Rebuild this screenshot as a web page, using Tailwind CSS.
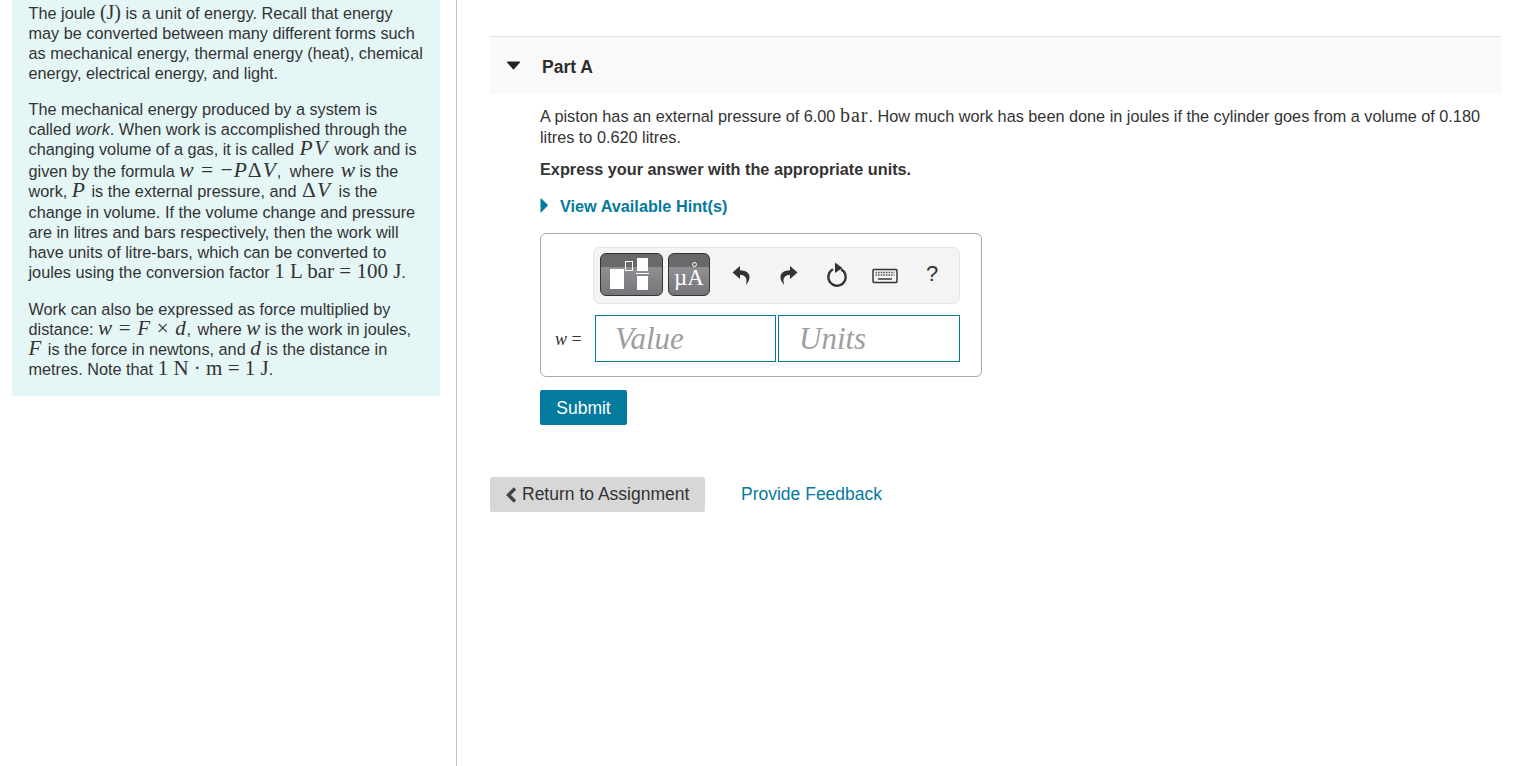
<!DOCTYPE html>
<html lang="en">
  <head>
    <meta charset="UTF-8" />
    <title>Part A</title>
    <script src="https://cdn.jsdelivr.net/npm/@tailwindcss/browser@4"></script>
  </head>
  <body class="bg-white h-[766px] overflow-hidden font-['Liberation_Sans',sans-serif] text-[#333] text-[16.25px] leading-[20px]">
    <div class="flex h-[766px] overflow-hidden">
      <!-- intro column -->
      <div class="w-[457px] h-full shrink-0 border-r border-[#b6c8d6] pl-[12px] pr-[16px]">
        <div class="bg-[#e5f6f7] w-[428px] h-[396px] pl-[16.5px] pt-[3px] whitespace-nowrap">
          <div>The joule <span class="font-['Liberation_Serif',serif] text-[20px] leading-[0]">(J)</span> is a unit of energy. Recall that energy</div>
          <div>may be converted between many different forms such</div>
          <div>as mechanical energy, thermal energy (heat), chemical</div>
          <div>energy, electrical energy, and light.</div>

          <div class="mt-[16px]">The mechanical energy produced by a system is</div>
          <div>called <em>work</em>. When work is accomplished through the</div>
          <div>changing volume of a gas, it is called <span class="ml-[1px] mr-[1px] font-['Liberation_Serif',serif] italic text-[21.5px] tracking-[1.5px] leading-[0]">PV</span> work and is</div>
          <div class="mt-[2px]">given by the formula <span class="font-['Liberation_Serif',serif] text-[21.5px] tracking-[1px] leading-[0]"><i>w</i> = −<i>P</i>Δ<i>V</i></span>,<span class="ml-[4px]"> where</span> <span class="ml-[2px] font-['Liberation_Serif',serif] italic text-[21.5px] leading-[0]">w</span> is the</div>
          <div>work, <span class="mr-[1px] font-['Liberation_Serif',serif] italic text-[21.5px] tracking-[1px] leading-[0]">P</span> is the external pressure, and <span class="ml-[1px] mr-[3px] font-['Liberation_Serif',serif] text-[21.5px] tracking-[1px] leading-[0]">Δ<i>V</i></span> is the</div>
          <div class="mt-[1px]">change in volume. If the volume change and pressure</div>
          <div>are in litres and bars respectively, then the work will</div>
          <div>have units of litre-bars, which can be converted to</div>
          <div>joules using the conversion factor <span class="font-['Liberation_Serif',serif] text-[21px] leading-[0]">1 L bar = 100 J</span>.</div>

          <div class="mt-[17px]">Work can also be expressed as force multiplied by</div>
          <div>distance: <span class="font-['Liberation_Serif',serif] text-[21px] tracking-[.7px] leading-[0]"><i>w</i> = <i>F</i> × <i>d</i></span>,<span class="ml-[2px]"> where</span> <span class="font-['Liberation_Serif',serif] italic text-[21px] leading-[0]">w</span> is the work in joules,</div>
          <div><span class="mr-[1px] font-['Liberation_Serif',serif] italic text-[21px] tracking-[1px] leading-[0]">F</span> is the force in newtons, and <span class="font-['Liberation_Serif',serif] italic text-[21px] tracking-[1px] leading-[0]">d</span> is the distance in</div>
          <div>metres. Note that <span class="font-['Liberation_Serif',serif] text-[21px] leading-[0]">1 N · m = 1 J</span>.</div>
        </div>
      </div>

      <!-- part column -->
      <div class="pl-[33px] pr-[13px] pt-[36px] flex-1">
        <div class="h-[58px] bg-[#f9f9f9] border-t border-[#e0e0e0] flex items-center">
          <svg class="ml-[16px] w-[15px] h-[10px]" viewBox="0 0 15 10"><path d="M1 1.5 Q0.5 0.5 1.8 0.5 H13.2 Q14.5 0.5 14 1.5 L8.2 8 Q7.5 8.8 6.8 8 Z" fill="#222" /></svg>
          <span class="ml-[21px] mt-[2px] font-bold text-[17.5px] text-[#2d2d2d]">Part A</span>
        </div>

        <div class="pl-[50px]">
          <p class="mt-[12px] leading-[21px] whitespace-nowrap">A piston has an external pressure of 6.00 <span class="font-['Liberation_Serif',serif] text-[20px] tracking-[1px] leading-[0]">bar</span>. How much work has been done in joules if the cylinder goes from a volume of 0.180<br />litres to 0.620 litres.</p>
          <p class="mt-[11px] font-bold">Express your answer with the appropriate units.</p>
          <div class="mt-[17px] flex items-center text-[#047a9c] font-bold">
            <svg class="-mt-[2px] w-[8px] h-[15px]" viewBox="0 0 8 15"><path d="M0.5 1 Q0.5 0 1.5 0.8 L7.5 6.5 Q8 7.2 7.5 8 L1.5 14 Q0.5 15 0.5 14 Z" fill="#047a9c" /></svg>
            <span class="ml-[12px]">View Available Hint(s)</span>
          </div>

          <!-- answer box -->
          <div class="mt-[17px] w-[442px] h-[144px] border border-[#a9a9a9] rounded-[6px] pl-[14px] pt-[13px]">
            <div class="ml-[38px] w-[367px] h-[57px] bg-[#f4f4f4] border border-[#e4e4e4] rounded-[7px] flex items-start pl-[6px] pt-[5px]">
              <div class="w-[63px] h-[43px] rounded-[6px] border border-[#333] overflow-hidden relative bg-[linear-gradient(#696969_0,#696969_32%,#8f8f94_33%,#747479_100%)]">
                <span class="absolute left-[9px] top-[15px] w-[14px] h-[20px] bg-white"></span>
                <span class="absolute left-[24px] top-[7px] w-[8px] h-[10px] border border-white"></span>
                <span class="absolute left-[36px] top-[4px] w-[11px] h-[13px] bg-white"></span>
                <span class="absolute left-[35px] top-[19px] w-[13px] h-[1px] bg-white"></span>
                <span class="absolute left-[36px] top-[22px] w-[11px] h-[14px] bg-white"></span>
              </div>
              <div class="ml-[5px] w-[42px] h-[43px] rounded-[6px] border border-[#333] relative bg-[linear-gradient(#696969_0,#696969_32%,#8f8f94_33%,#747479_100%)] flex items-end justify-center pb-[5px] font-['Liberation_Serif',serif] text-white text-[23px] leading-[24px]">
                µA
                <span class="absolute left-[23px] top-[8px] w-[5px] h-[5px] rounded-full border border-white"></span>
              </div>
              <div class="flex items-center h-[43px]">
                <svg class="ml-[21px] w-[20px] h-[24px]" viewBox="0 0 20 24"><path d="M9 3 L1.5 9.5 L9 16 V12 C13 12 15.5 14 15.5 17.5 C15.5 19 15.2 20.5 15 22 C17.5 19 18.5 16.5 18.5 14 C18.5 9.5 14.5 7.3 9 7.2 Z" fill="#333" /></svg>
                <svg class="ml-[28px] w-[20px] h-[24px]" viewBox="0 0 20 24"><path d="M11 3 L18.5 9.5 L11 16 V12 C7 12 4.5 14 4.5 17.5 C4.5 19 4.8 20.5 5 22 C2.5 19 1.5 16.5 1.5 14 C1.5 9.5 5.5 7.3 11 7.2 Z" fill="#333" /></svg>
                <svg class="ml-[27px] w-[22px] h-[26px]" viewBox="0 0 22 26"><circle cx="11" cy="15" r="8.7" fill="none" stroke="#333" stroke-width="2.4" stroke-dasharray="46 9" transform="rotate(-62 11 15)" /><path d="M9 0.5 L16.5 6 L9 11 Z" fill="#333" /></svg>
                <svg class="ml-[24px] mt-[3px] w-[26px] h-[16px]" viewBox="0 0 26 16">
                  <rect x="1" y="1.5" width="24" height="13" rx="1" fill="none" stroke="#333" stroke-width="1.5" />
                  <path d="M3.5 4.5 H22.5 M3.5 7 H22.5" stroke="#555" stroke-width="1.4" stroke-dasharray="1.6 1" fill="none" />
                  <path d="M6 11 H20" stroke="#444" stroke-width="1.6" fill="none" />
                </svg>
                <span class="ml-[28px] -mt-[1px] text-[#333] text-[22px]">?</span>
              </div>
            </div>
            <div class="mt-[11px] flex items-center">
              <span class="w-[40px] font-['Liberation_Serif',serif] text-[18px] whitespace-nowrap"><i>w</i> =</span>
              <div class="w-[181px] h-[47px] border border-[#047a9c] pl-[19px] flex items-center font-['Liberation_Serif',serif] italic text-[31px] text-[#9e9e9e]">Value</div>
              <div class="ml-[2px] w-[182px] h-[47px] border border-[#047a9c] pl-[20px] flex items-center font-['Liberation_Serif',serif] italic text-[31px] text-[#9e9e9e]">Units</div>
            </div>
          </div>

          <button class="mt-[13px] block w-[87px] h-[35px] bg-[#047a9c] text-white text-[17.5px] rounded-[2px]">Submit</button>
        </div>

        <div class="mt-[52px] flex items-center">
          <div class="w-[215px] h-[35px] bg-[#d7d7d7] rounded-[2px] flex items-center pl-[16px] text-[17.5px]">
            <svg class="w-[11px] h-[16px]" viewBox="0 0 11 16"><path d="M9 1.5 L2.5 8 L9 14.5" fill="none" stroke="#444" stroke-width="3.4" /></svg>
            <span class="ml-[5px] -mt-[2px]">Return to Assignment</span>
          </div>
          <span class="ml-[36px] -mt-[2px] text-[#047a9c] text-[17.5px]">Provide Feedback</span>
        </div>
      </div>
    </div>
  </body>
</html>
